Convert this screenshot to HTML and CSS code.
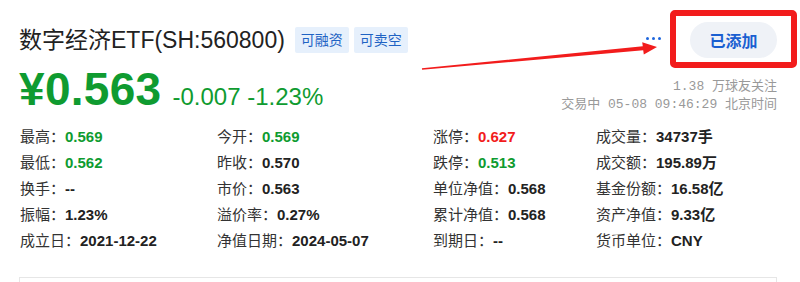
FILE: index.html
```html
<!DOCTYPE html>
<html lang="zh-CN">
<head>
<meta charset="utf-8">
<title>数字经济ETF</title>
<link rel="stylesheet" href="styles.css">
</head>
<body>
<div class="quote">
  <div class="head">
    <h1 class="name">数字经济ETF(SH:560800)</h1>
    <span class="tag">可融资</span>
    <span class="tag">可卖空</span>
    <span class="more"><i></i><i></i><i></i></span>
    <button class="follow">已添加</button>
  </div>
  <div class="price-row">
    <div class="price-group">
      <div class="price">¥0.563</div>
      <div class="change">-0.007 -1.23%</div>
    </div>
    <div class="meta">
      <div>1.38 万球友关注</div>
      <div>交易中 05-08 09:46:29 北京时间</div>
    </div>
  </div>
  <div class="stats">
    <div class="cell">最高：<b class="down">0.569</b></div>
    <div class="cell">今开：<b class="down">0.569</b></div>
    <div class="cell">涨停：<b class="up">0.627</b></div>
    <div class="cell">成交量：<b>34737手</b></div>
    <div class="cell">最低：<b class="down">0.562</b></div>
    <div class="cell">昨收：<b>0.570</b></div>
    <div class="cell">跌停：<b class="down">0.513</b></div>
    <div class="cell">成交额：<b>195.89万</b></div>
    <div class="cell">换手：<b>--</b></div>
    <div class="cell">市价：<b>0.563</b></div>
    <div class="cell">单位净值：<b>0.568</b></div>
    <div class="cell">基金份额：<b>16.58亿</b></div>
    <div class="cell">振幅：<b>1.23%</b></div>
    <div class="cell">溢价率：<b>0.27%</b></div>
    <div class="cell">累计净值：<b>0.568</b></div>
    <div class="cell">资产净值：<b>9.33亿</b></div>
    <div class="cell">成立日：<b>2021-12-22</b></div>
    <div class="cell">净值日期：<b>2024-05-07</b></div>
    <div class="cell">到期日：<b>--</b></div>
    <div class="cell">货币单位：<b>CNY</b></div>
  </div>
  <div class="panel"></div>

  <div class="annot-box"></div>
  <svg class="annot-arrow" width="800" height="282" viewBox="0 0 800 282">
    <polygon points="421.9,68.2 642.8,46.3 642.2,42.3 657,47 643.8,54.6 643.2,50.3 422.1,69.8" fill="#f21c1c"/>
  </svg>
</div>
</body>
</html>
```

FILE: styles.css
```css
* { box-sizing: border-box; }
html, body { margin: 0; padding: 0; background: #fff; }
body {
  font-family: "Liberation Sans", "Noto Sans CJK SC", sans-serif;
  color: #333;
}
.quote {
  position: relative;
  width: 800px;
  height: 282px;
  overflow: hidden;
  padding: 0 23px 0 19px;
}
.head {
  display: flex;
  align-items: center;
  height: 36px;
  margin-top: 22px;
}
.name {
  margin: 0;
  font-weight: normal;
  font-size: 23px;
  color: #222;
  line-height: 30px;
}
.tag {
  margin-left: 10px;
  height: 26px;
  line-height: 26px;
  padding: 0 6px;
  font-size: 14px;
  color: #1f63c4;
  background: #e6f0fc;
  border-radius: 2px;
}
.tag + .tag { margin-left: 5px; }
.more {
  margin-left: auto;
  display: flex;
  gap: 3px;
  margin-right: 29px;
  margin-top: -4px;
}
.more i {
  display: block;
  width: 3px;
  height: 3px;
  border-radius: 50%;
  background: #1e66dd;
}
.follow {
  width: 87px;
  height: 36px;
  border: 0;
  border-radius: 18px;
  background: #eff2f7;
  color: #1a5fd1;
  font-family: "Noto Sans CJK SC", sans-serif;
  font-weight: bold;
  font-size: 16px;
  padding: 0;
}
.price-row {
  display: flex;
  margin-top: 8px;
}
.price-group {
  display: flex;
  align-items: baseline;
}
.price {
  font-size: 46px;
  line-height: 46px;
  font-weight: bold;
  color: #0f9b30;
  letter-spacing: 0.3px;
}
.change {
  margin-left: 11px;
  font-size: 24px;
  color: #0f9b30;
}
.meta {
  margin-left: auto;
  margin-top: 12px;
  text-align: right;
  font-family: "Liberation Mono", "Noto Sans CJK SC", monospace;
  font-size: 13px;
  line-height: 18px;
  color: #999;
}
.stats {
  display: grid;
  grid-template-columns: 197px 216px 163px 1fr;
  grid-auto-rows: 26px;
  margin-top: 10px;
  padding-left: 1px;
  font-size: 15px;
  line-height: 26px;
  color: #333;
}
.cell b { color: #222; }
.cell b.down { color: #0f9b30; }
.cell b.up { color: #f21c1c; }
.panel {
  margin-top: 23px;
  height: 80px;
  border: 1px solid #e6e6e6;
}
.annot-box {
  position: absolute;
  left: 670px;
  top: 10px;
  width: 127px;
  height: 58px;
  border: 6px solid #f21c1c;
  border-radius: 5px;
}
.annot-arrow {
  position: absolute;
  left: 0;
  top: 0;
  pointer-events: none;
}
```
